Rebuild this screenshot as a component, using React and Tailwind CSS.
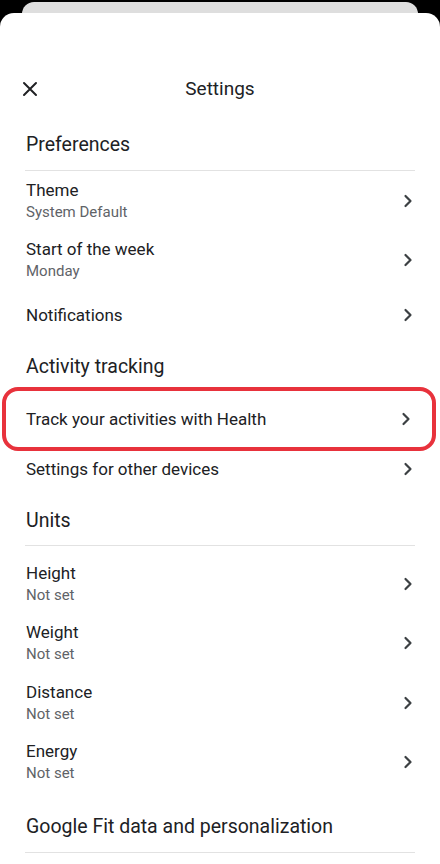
import React from 'react'

const Chevron = () => (
  <svg width="10" height="14" viewBox="0 0 10 14" className="shrink-0">
    <path d="M2.5 2 L7.5 7 L2.5 12" fill="none" stroke="#3c4043" strokeWidth="2.2" strokeLinecap="round" strokeLinejoin="round" />
  </svg>
)

const Row = ({ title, sub }) => (
  <div className={`flex items-center justify-between pl-[26px] pr-[27px] ${sub ? 'h-[59.5px]' : 'h-[50px]'}`}>
    <div className="flex flex-col">
      <span className="text-[17px] leading-[22px] text-[#202124]">{title}</span>
      {sub && <span className="text-[15px] leading-[22px] text-[#5f6368]">{sub}</span>}
    </div>
    <Chevron />
  </div>
)

const SectionTitle = ({ children, className = '' }) => (
  <div className={`px-[26px] text-[19.5px] leading-[24px] text-[#202124] ${className}`}>{children}</div>
)

const Divider = () => <div className="mx-[25px] h-px bg-[#e2e2e2]" />

const App = () => {
  return (
    <div className="w-[440px] h-[864px] overflow-hidden bg-black font-['Roboto',sans-serif]">
      {/* card peeking out behind the sheet */}
      <div className="mx-[22px] mt-[2px] h-[24px] rounded-t-[12px] bg-[#dedede]" />
      <div className="-mt-[13px] h-[860px] rounded-t-[14px] bg-white">
        <div className="pt-[51px]">
          <div className="relative flex h-[50px] items-center justify-center">
            <button className="absolute left-[22px] top-[17px]">
              <svg width="16" height="16" viewBox="0 0 16 16">
                <path d="M2 2 L14 14 M14 2 L2 14" stroke="#202124" strokeWidth="2" strokeLinecap="round" />
              </svg>
            </button>
            <span className="text-[19px] text-[#202124]">Settings</span>
          </div>
        </div>

        <SectionTitle className="pt-[19px] pb-[13px]">Preferences</SectionTitle>
        <Divider />
        <Row title="Theme" sub="System Default" />
        <Row title="Start of the week" sub="Monday" />
        <Row title="Notifications" />

        <SectionTitle className="pt-[15px] pb-[8px]">Activity tracking</SectionTitle>
        <div className="ml-[2px] mr-[4px] flex h-[64px] items-center justify-between rounded-[16px] border-[4px] border-[#e8323c] pl-[20px] pr-[21px]">
          <span className="text-[17px] leading-[22px] text-[#202124]">Track your activities with Health</span>
          <Chevron />
        </div>
        <div className="flex h-[36px] items-center justify-between pl-[26px] pr-[27px]">
          <span className="text-[17px] leading-[22px] text-[#202124]">Settings for other devices</span>
          <Chevron />
        </div>

        <SectionTitle className="pt-[22px] pb-[12px]">Units</SectionTitle>
        <Divider />
        <div className="pt-[8px]">
          <Row title="Height" sub="Not set" />
          <Row title="Weight" sub="Not set" />
          <Row title="Distance" sub="Not set" />
          <Row title="Energy" sub="Not set" />
        </div>

        <div className="px-[26px] pt-[22px] pb-[12px] text-[19.5px] leading-[26px] text-[#202124]">
          Google Fit data and personalization
        </div>
        <Divider />
      </div>
    </div>
  )
}

export default App
